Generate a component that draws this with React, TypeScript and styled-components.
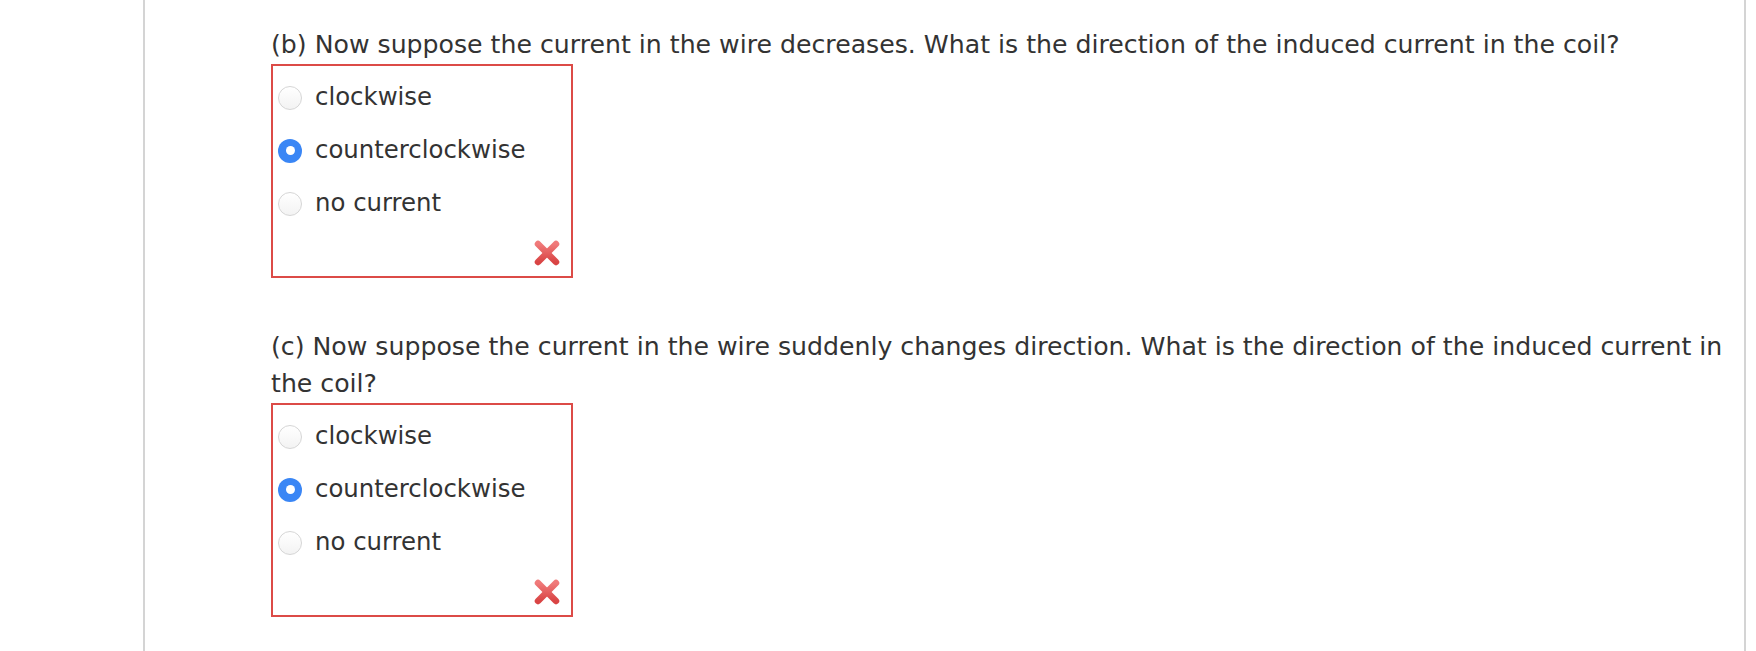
import React from "react";
import styled, { createGlobalStyle } from "styled-components";

const GlobalStyle = createGlobalStyle`
  html, body {
    margin: 0;
    padding: 0;
    background: #fff;
  }
  body {
    font-family: "DejaVu Sans", Verdana, sans-serif;
    color: #333;
  }
`;

const Page = styled.div`
  width: 1756px;
  height: 651px;
  overflow: hidden;
  background: #fff;
`;

const Panel = styled.div`
  margin-left: 143px;
  width: 1603px;
  height: 651px;
  box-sizing: border-box;
  border-left: 2px solid #d4d4d4;
  border-right: 2px solid #d4d4d4;
  padding: 26px 0 0 126px;
`;

const Part = styled.section<{ $gap?: number }>`
  margin-top: ${(p) => p.$gap ?? 0}px;
`;

const Question = styled.p`
  margin: 0 0 1px;
  font-size: 25.2px;
  line-height: 37px;
  color: #333;
`;

const AnswerBox = styled.div`
  width: 302px;
  box-sizing: border-box;
  border: 2px solid #dc4b47;
  padding: 5px 0 0 5px;
`;

const Option = styled.label`
  display: flex;
  align-items: center;
  gap: 13px;
  height: 53px;
  font-size: 24.4px;
  color: #333;
`;

const OptionText = styled.span`
  position: relative;
  top: -1px;
`;

const Radio = styled.span<{ $checked?: boolean }>`
  width: 24px;
  height: 24px;
  border-radius: 50%;
  box-sizing: border-box;
  flex-shrink: 0;
  background: ${(p) =>
    p.$checked ? "#3a86f5" : "linear-gradient(#ffffff, #f3f3f3)"};
  border: ${(p) => (p.$checked ? "none" : "1.5px solid #d6d6d6")};
  display: flex;
  align-items: center;
  justify-content: center;

  &::after {
    content: "";
    display: ${(p) => (p.$checked ? "block" : "none")};
    width: 9px;
    height: 9px;
    border-radius: 50%;
    background: #fff;
  }
`;

const Feedback = styled.div`
  height: 46px;
  display: flex;
  align-items: center;
  justify-content: flex-end;
  padding-right: 10px;
`;

const WrongMark = () => (
  <svg width="28" height="28" viewBox="0 0 28 28" aria-label="incorrect">
    <defs>
      <linearGradient id="xg" x1="0" y1="0" x2="0" y2="1">
        <stop offset="0" stopColor="#f07a7a" />
        <stop offset="1" stopColor="#d94444" />
      </linearGradient>
    </defs>
    <g stroke="url(#xg)" strokeWidth="6.5" strokeLinecap="round">
      <line x1="5" y1="5" x2="23" y2="23" />
      <line x1="23" y1="5" x2="5" y2="23" />
    </g>
  </svg>
);

const options = ["clockwise", "counterclockwise", "no current"];

const Choices = ({ selected }: { selected: string }) => (
  <AnswerBox>
    {options.map((o) => (
      <Option key={o}>
        <Radio $checked={o === selected} />
        <OptionText>{o}</OptionText>
      </Option>
    ))}
    <Feedback>
      <WrongMark />
    </Feedback>
  </AnswerBox>
);

export default function App() {
  return (
    <Page>
      <GlobalStyle />
      <Panel>
        <Part>
          <Question>
            (b) Now suppose the current in the wire decreases. What is the direction of the induced
            current in the coil?
          </Question>
          <Choices selected="counterclockwise" />
        </Part>
        <Part $gap={50}>
          <Question>
            (c) Now suppose the current in the wire suddenly changes direction. What is the direction
            of the induced current in the coil?
          </Question>
          <Choices selected="counterclockwise" />
        </Part>
      </Panel>
    </Page>
  );
}
